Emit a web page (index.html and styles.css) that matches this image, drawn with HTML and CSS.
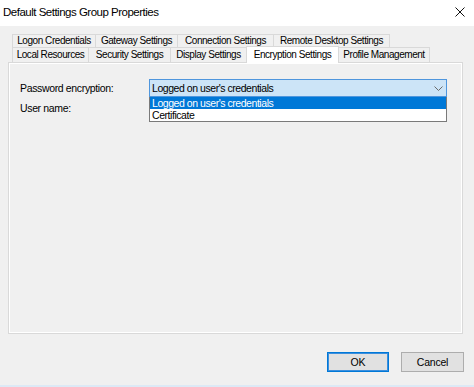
FILE: index.html
```html
<!DOCTYPE html>
<html>
<head>
<meta charset="utf-8">
<title>Default Settings Group Properties</title>
<link rel="stylesheet" href="styles.css">
</head>
<body>
<div class="window">
  <div class="titlebar">
    <span class="title">Default Settings Group Properties</span>
    <svg class="close" viewBox="0 0 10 10" width="10" height="10"><path d="M0.5 0.5 L9.5 9.5 M9.5 0.5 L0.5 9.5" stroke="#111" stroke-width="1" fill="none"/></svg>
  </div>
  <div class="body">
    <div class="tabs">
      <div class="tabrow row1">
        <div class="tab w-logon">Logon Credentials</div>
        <div class="tab w-gateway">Gateway Settings</div>
        <div class="tab w-conn">Connection Settings</div>
        <div class="tab w-remote">Remote Desktop Settings</div>
      </div>
      <div class="tabrow row2">
        <div class="tab w-local">Local Resources</div>
        <div class="tab w-sec">Security Settings</div>
        <div class="tab w-disp">Display Settings</div>
        <div class="tab sel w-enc">Encryption Settings</div>
        <div class="tab w-prof">Profile Management</div>
      </div>
    </div>
    <div class="panel">
      <div class="field">
        <span class="label">Password encryption:</span>
        <div class="combo-wrap">
          <div class="combo">
            <span class="combo-text">Logged on user's credentials</span>
            <svg class="chev" viewBox="0 0 9 5" width="9" height="5"><path d="M0.5 0.5 L4.5 4.5 L8.5 0.5" stroke="#6a6a6a" stroke-width="1" fill="none"/></svg>
          </div>
          <div class="list">
            <div class="item hl">Logged on user's credentials</div>
            <div class="item">Certificate</div>
          </div>
        </div>
      </div>
      <div class="field">
        <span class="label">User name:</span>
      </div>
    </div>
    <div class="buttons">
      <button class="btn ok">OK</button>
      <button class="btn cancel">Cancel</button>
    </div>
  </div>
</div>
</body>
</html>
```

FILE: styles.css
```css
* { box-sizing: border-box; margin: 0; padding: 0; }
html, body { width: 474px; height: 387px; overflow: hidden; }
body {
  background: #f0f0f0;
  font-family: "Liberation Sans", Arial, sans-serif;
  font-size: 10.5px;
  color: #000;
}
.window {
  height: 387px;
  display: flex;
  flex-direction: column;
  border-bottom: 2px solid #dde9f5;
}
.titlebar {
  height: 26px;
  flex: 0 0 26px;
  background: #fff;
  display: flex;
  align-items: center;
  justify-content: space-between;
  padding: 0 9px 2px 3px;
}
.title { font-size: 11.5px; letter-spacing: -0.5px; color: #000; }
.close { display: block; }

.body {
  flex: 1;
  display: flex;
  flex-direction: column;
  padding: 8px 11px 0 8px;
}
.tabs { display: flex; flex-direction: column; padding-left: 4px; }
.tabrow { display: flex; align-items: flex-end; }
.row1 { height: 13px; }
.row2 { height: 15px; }
.tab {
  height: 100%;
  border: 1px solid #d9d9d9;
  border-bottom: none;
  border-right: none;
  background: #f0f0f0;
  font-size: 10px;
  letter-spacing: -0.45px;
  text-align: center;
  white-space: nowrap;
  overflow: hidden;
}
.row1 .tab { line-height: 11px; }
.row2 .tab { line-height: 14px; }
.tab:last-child { border-right: 1px solid #d9d9d9; }
.tab.sel {
  position: relative;
  z-index: 1;
  height: 17px;
  margin-bottom: -1px;
  background: #fff;
  border-right: 1px solid #d9d9d9;
  line-height: 15px;
}
.tab.sel + .tab { border-left: none; }

.w-logon { width: 83px; }
.w-gateway { width: 82px; }
.w-conn { width: 96px; }
.w-remote { width: 117px; }
.w-local { width: 76px; }
.w-sec { width: 82px; }
.w-disp { width: 76px; }
.w-enc { width: 93px; }
.w-prof { width: 91px; }

.panel {
  height: 272px;
  flex: 0 0 272px;
  border: 1px solid #d9d9d9;
  box-shadow: inset 1px 1px 0 #fff, inset -1px -1px 0 #fff;
  background: #f0f0f0;
  padding: 16px 0 0 11px;
  display: flex;
  flex-direction: column;
  gap: 2px;
}
.field { display: flex; align-items: center; height: 18px; }
.label { width: 129px; letter-spacing: -0.35px; }
.combo-wrap { position: relative; width: 298px; height: 18px; }
.combo {
  height: 18px;
  border: 1px solid #4f96dd;
  background: #cce4f7;
  display: flex;
  align-items: center;
  justify-content: space-between;
  padding: 0 3px 0 2px;
}
.combo-text { letter-spacing: -0.45px; }
.chev { display: block; }
.list {
  position: absolute;
  top: 100%;
  left: 0;
  width: 298px;
  background: #fff;
  border: 1px solid #7a7a7a;
  border-top: none;
  z-index: 2;
}
.item { height: 12px; line-height: 12px; padding-left: 2px; letter-spacing: -0.45px; }
.item.hl { background: #0078d7; color: #fff; }

.buttons {
  display: flex;
  justify-content: flex-end;
  gap: 12px;
  margin-top: 18px;
  margin-right: -1px;
}
.btn {
  height: 20px;
  font-family: "Liberation Sans", Arial, sans-serif;
  font-size: 10.5px;
  letter-spacing: -0.2px;
  color: #000;
  background: #e1e1e1;
  border: 1px solid #adadad;
}
.btn.ok { width: 62px; border-color: #0078d7; box-shadow: inset 0 0 0 1px #3c8fdd; }
.btn.cancel { width: 63px; }
```
